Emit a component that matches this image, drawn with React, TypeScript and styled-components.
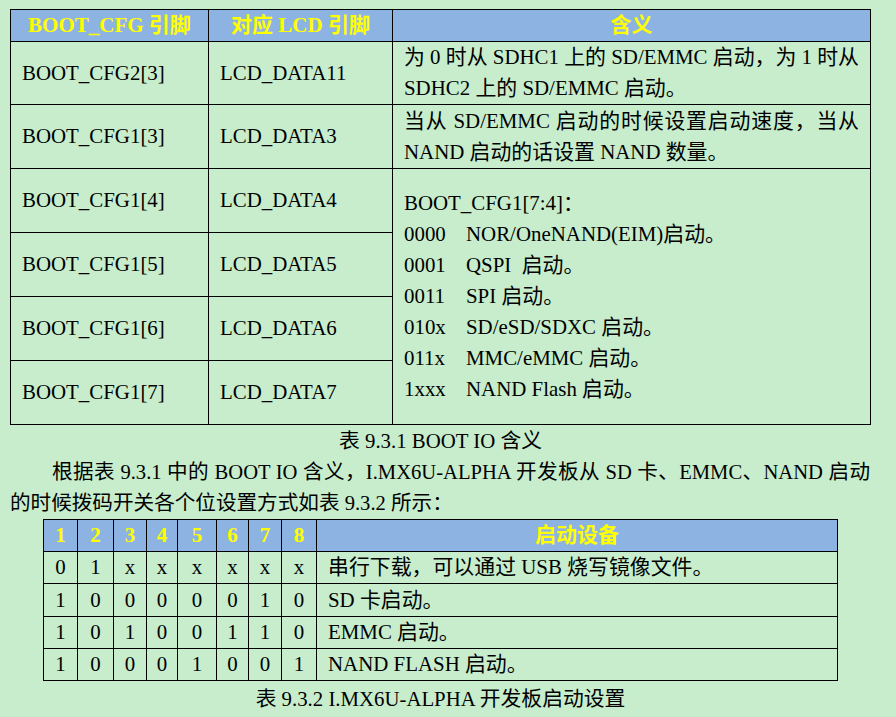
import React from "react";
import styled, { createGlobalStyle } from "styled-components";

const Global = createGlobalStyle`
  html, body { margin: 0; padding: 0; background: #c7edcc; }
  body {
    font-family: "Liberation Serif", "Noto Sans CJK SC", serif;
    color: #000;
    font-size: 21px;
  }
`;

const Page = styled.div`
  width: 896px;
  height: 717px;
  overflow: hidden;
  box-sizing: border-box;
  padding: 9px 0 0 10px;
  background: #c7edcc;
`;

const Content = styled.div`
  width: 861px;
  display: flex;
  flex-direction: column;
  align-items: stretch;
`;

const Table = styled.table<{ $w: number }>`
  border-collapse: collapse;
  table-layout: fixed;
  width: ${(p) => p.$w}px;
  align-self: center;
  font-size: 20.9px;
  line-height: 31px;
`;

const HeadRow = styled.tr<{ $h: number }>`
  height: ${(p) => p.$h}px;
  background: #8db3e2;
`;

const Row = styled.tr<{ $h: number }>`
  height: ${(p) => p.$h}px;
`;

const Th = styled.th`
  border: 1px solid #000;
  padding: 0;
  color: #ffff00;
  font-weight: bold;
  font-size: 21px;
  text-align: center;
  vertical-align: middle;
  white-space: nowrap;
`;

const Td = styled.td<{ $center?: boolean }>`
  border: 1px solid #000;
  padding: 0 ${(p) => (p.$center ? "0" : "11px")};
  text-align: ${(p) => (p.$center ? "center" : "left")};
  vertical-align: middle;
  white-space: nowrap;
`;

const JLine = styled.span`
  display: block;
  text-align: justify;
  text-align-last: justify;
`;

const Line = styled.span`
  display: block;
`;

const CodeList = styled.div`
  display: grid;
  grid-template-columns: 62px auto;
`;

const Caption = styled.div<{ $lh: number }>`
  text-align: center;
  font-size: 20.8px;
  line-height: ${(p) => p.$lh}px;
`;

const Para = styled.div`
  line-height: 31px;
  font-size: 20.6px;
  width: 860px;
`;

const ParaFirst = styled.span`
  display: block;
  padding-left: 42px;
  text-align: justify;
  text-align-last: justify;
`;

const cfgRows: [string, string][] = [
  ["BOOT_CFG1[4]", "LCD_DATA4"],
  ["BOOT_CFG1[5]", "LCD_DATA5"],
  ["BOOT_CFG1[6]", "LCD_DATA6"],
  ["BOOT_CFG1[7]", "LCD_DATA7"],
];

const codes: [string, string][] = [
  ["0000", "NOR/OneNAND(EIM)启动。"],
  ["0001", "QSPI\u00a0 启动。"],
  ["0011", "SPI 启动。"],
  ["010x", "SD/eSD/SDXC 启动。"],
  ["011x", "MMC/eMMC 启动。"],
  ["1xxx", "NAND Flash 启动。"],
];

const bits: { v: string[]; d: string; h: number }[] = [
  { v: ["0", "1", "x", "x", "x", "x", "x", "x"], d: "串行下载，可以通过 USB 烧写镜像文件。", h: 32 },
  { v: ["1", "0", "0", "0", "0", "0", "1", "0"], d: "SD 卡启动。", h: 33 },
  { v: ["1", "0", "1", "0", "0", "1", "1", "0"], d: "EMMC 启动。", h: 32 },
  { v: ["1", "0", "0", "0", "1", "0", "0", "1"], d: "NAND FLASH 启动。", h: 32 },
];

const bitCols = [34, 36, 33, 31, 39, 32, 33, 35];

export default function App() {
  return (
    <Page>
      <Global />
      <Content>
        <Table $w={861}>
          <colgroup>
            <col style={{ width: 198 }} />
            <col style={{ width: 184 }} />
            <col />
          </colgroup>
          <tbody>
            <HeadRow $h={32}>
              <Th>BOOT_CFG 引脚</Th>
              <Th>对应 LCD 引脚</Th>
              <Th>含义</Th>
            </HeadRow>
            <Row $h={63}>
              <Td>BOOT_CFG2[3]</Td>
              <Td>LCD_DATA11</Td>
              <Td>
                <JLine>为 0 时从 SDHC1 上的 SD/EMMC 启动，为 1 时从</JLine>
                <Line>SDHC2 上的 SD/EMMC 启动。</Line>
              </Td>
            </Row>
            <Row $h={64}>
              <Td>BOOT_CFG1[3]</Td>
              <Td>LCD_DATA3</Td>
              <Td>
                <JLine>当从 SD/EMMC 启动的时候设置启动速度，当从</JLine>
                <Line>NAND 启动的话设置 NAND 数量。</Line>
              </Td>
            </Row>
            {cfgRows.map(([a, b], i) => (
              <Row $h={64} key={a}>
                <Td>{a}</Td>
                <Td>{b}</Td>
                {i === 0 && (
                  <Td rowSpan={4}>
                    <Line>BOOT_CFG1[7:4]：</Line>
                    <CodeList>
                      {codes.map(([c, t]) => (
                        <React.Fragment key={c}>
                          <span>{c}</span>
                          <span>{t}</span>
                        </React.Fragment>
                      ))}
                    </CodeList>
                  </Td>
                )}
              </Row>
            ))}
          </tbody>
        </Table>
        <Caption $lh={32}>表 9.3.1 BOOT IO 含义</Caption>
        <Para>
          <ParaFirst>
            根据表 9.3.1 中的 BOOT IO 含义，I.MX6U-ALPHA 开发板从 SD 卡、EMMC、NAND 启动
          </ParaFirst>
          <Line>的时候拨码开关各个位设置方式如表 9.3.2 所示：</Line>
        </Para>
        <Table $w={795}>
          <colgroup>
            {bitCols.map((w, i) => (
              <col key={i} style={{ width: w }} />
            ))}
            <col />
          </colgroup>
          <tbody>
            <HeadRow $h={32}>
              {bitCols.map((_, i) => (
                <Th key={i}>{i + 1}</Th>
              ))}
              <Th>启动设备</Th>
            </HeadRow>
            {bits.map((r, ri) => (
              <Row $h={r.h} key={ri}>
                {r.v.map((v, i) => (
                  <Td $center key={i}>
                    {v}
                  </Td>
                ))}
                <Td>{r.d}</Td>
              </Row>
            ))}
          </tbody>
        </Table>
        <Caption $lh={36}>表 9.3.2 I.MX6U-ALPHA 开发板启动设置</Caption>
      </Content>
    </Page>
  );
}
